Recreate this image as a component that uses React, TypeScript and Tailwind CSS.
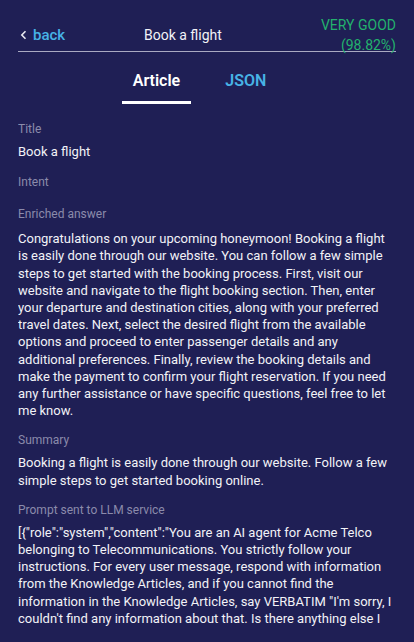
import React from "react";

const enriched =
  "Congratulations on your upcoming honeymoon! Booking a flight is easily done through our website. You can follow a few simple steps to get started with the booking process. First, visit our website and navigate to the flight booking section. Then, enter your departure and destination cities, along with your preferred travel dates. Next, select the desired flight from the available options and proceed to enter passenger details and any additional preferences. Finally, review the booking details and make the payment to confirm your flight reservation. If you need any further assistance or have specific questions, feel free to let me know.";

const summary =
  "Booking a flight is easily done through our website. Follow a few simple steps to get started booking online.";

const prompt =
  '[{"role":"system","content":"You are an AI agent for Acme Telco belonging to Telecommunications. You strictly follow your instructions. For every user message, respond with information from the Knowledge Articles, and if you cannot find the information in the Knowledge Articles, say VERBATIM "I\'m sorry, I couldn\'t find any information about that. Is there anything else I can help you with?" and nothing else."}]';

function Label({ children }: { children: React.ReactNode }) {
  return <div className="text-[12px] leading-[16px] text-[#8b8bab]">{children}</div>;
}

function Value({ children, extra = "" }: { children: React.ReactNode; extra?: string }) {
  return (
    <div className={"text-[13px] leading-[17.2px] text-[#f2f2f7] " + (extra || "mt-[6px]")}>{children}</div>
  );
}

export default function App() {
  return (
    <div
      className="w-[414px] h-[642px] overflow-hidden bg-[#1f1f55] px-[18px] pt-[18px] pb-[15px] flex flex-col"
      style={{ fontFamily: "Roboto, 'Noto Sans', sans-serif" }}
    >
      <div className="grid grid-cols-3 grid-rows-[34px] h-[34px] shrink-0 items-center border-b border-[#a9a9c2]">
        <div className="flex items-center gap-[6px] text-[15px] font-medium text-[#47b3e6]">
          <svg width="7" height="10" viewBox="0 0 7 10" className="ml-[2px]">
            <path d="M5.5 1.2 L1.8 5 L5.5 8.8" fill="none" stroke="#e8e8f0" strokeWidth="1.6" />
          </svg>
          <span>back</span>
        </div>
        <div className="text-[14px] text-[#f2f2f7] whitespace-nowrap">Book a flight</div>
        <div className="text-right text-[14px] leading-[20px] text-[#23b26d] whitespace-nowrap">
          <div>VERY GOOD</div>
          <div>(98.82%)</div>
        </div>
      </div>

      <div className="flex justify-center gap-[23px] pr-[15px] mt-[10px] shrink-0">
        <div className="px-[11px] pt-[7px] pb-[8px] border-b-[3px] border-white text-[16px] font-semibold text-white">
          Article
        </div>
        <div className="px-[11px] pt-[7px] pb-[8px] text-[16px] font-semibold text-[#47b3e6]">JSON</div>
      </div>

      <div className="flex-1 min-h-0 overflow-hidden">
        <div className="mt-[17px]">
          <Label>Title</Label>
          <Value>Book a flight</Value>
        </div>
        <div className="mt-[14px]">
          <Label>Intent</Label>
        </div>
        <div className="mt-[16px]">
          <Label>Enriched answer</Label>
          <Value extra="mt-[8px]">{enriched}</Value>
        </div>
        <div className="mt-[13px]">
          <Label>Summary</Label>
          <Value>{summary}</Value>
        </div>
        <div className="mt-[13px]">
          <Label>Prompt sent to LLM service</Label>
          <Value>{prompt}</Value>
        </div>
      </div>
    </div>
  );
}
